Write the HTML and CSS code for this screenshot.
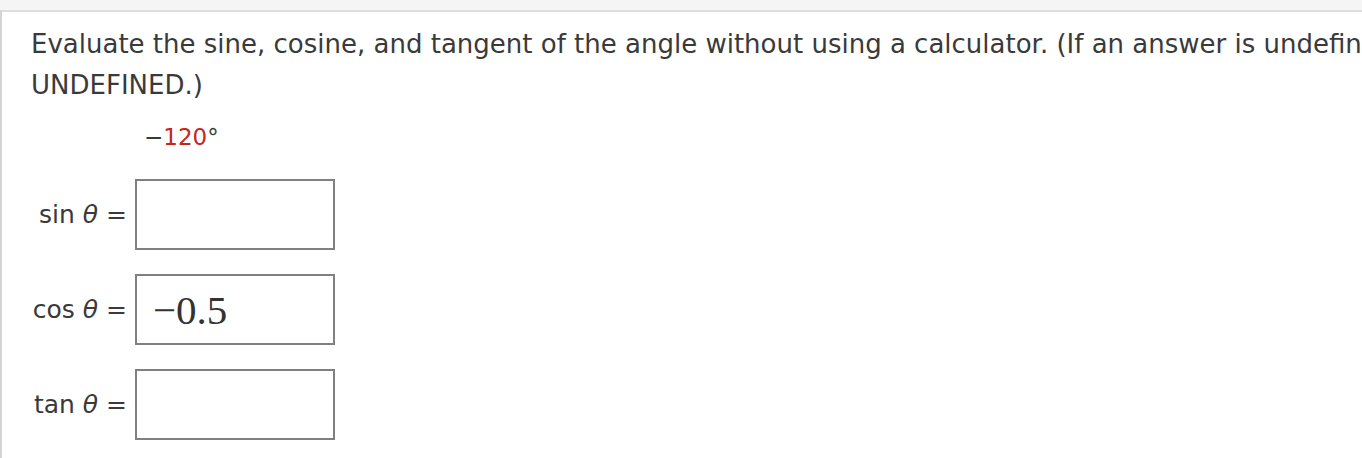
FILE: index.html
```html
<!DOCTYPE html>
<html>
<head>
<meta charset="utf-8">
<link rel="stylesheet" href="styles.css">
</head>
<body>
<div class="topbar"></div>
<div class="panel">
  <p class="question">Evaluate the sine, cosine, and tangent of the angle without using a calculator. (If an answer is undefined, enter UNDEFINED.)</p>
  <div class="angle"><span class="minus">&minus;</span><span class="red">120</span><span class="deg">&deg;</span></div>
  <div class="answers">
    <div class="label">sin <i class="theta">&theta;</i> =</div>
    <div class="box"></div>
    <div class="label">cos <i class="theta">&theta;</i> =</div>
    <div class="box"><span class="math">&minus;0.5</span></div>
    <div class="label">tan <i class="theta">&theta;</i> =</div>
    <div class="box"></div>
  </div>
</div>
</body>
</html>
```

FILE: styles.css
```css
html, body {
  margin: 0;
  padding: 0;
  background: #ffffff;
  overflow: hidden;
}
body {
  width: 1362px;
  height: 458px;
  font-family: "DejaVu Sans", Verdana, sans-serif;
  color: #3a3a3a;
}
.topbar {
  height: 10px;
  background: #f5f5f5;
}
.panel {
  width: 1700px;
  height: 448px;
  border-top: 2px solid #dddddd;
  border-left: 2px solid #d4d4d4;
  padding: 12px 0 0 29px;
  box-sizing: border-box;
  overflow: hidden;
}
.question {
  margin: 0;
  font-size: 26px;
  line-height: 41px;
  width: 1500px;
}
.angle {
  margin: 16px 0 0 113px;
  font-size: 23px;
  line-height: 30px;
}
.angle .red {
  color: #c4271d;
}
.answers {
  margin-top: 27px;
  display: grid;
  grid-template-columns: 98px 200px;
  column-gap: 6px;
  row-gap: 24px;
  align-items: center;
}
.label {
  font-size: 25px;
  text-align: right;
  white-space: nowrap;
  padding-right: 2px;
}
.theta {
  font-style: italic;
}
.box {
  width: 200px;
  height: 71px;
  box-sizing: border-box;
  border: 2px solid #808080;
  display: flex;
  align-items: center;
  padding-left: 16px;
}
.math {
  font-family: "Liberation Serif", "Times New Roman", serif;
  font-size: 41px;
  color: #333333;
}
```
